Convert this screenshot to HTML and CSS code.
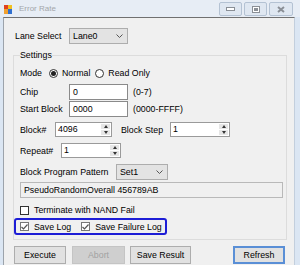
FILE: index.html
```html
<!DOCTYPE html>
<html lang="en">

<head>
    <meta charset="UTF-8">
    <title>Error Rate</title>
    <link rel="stylesheet" href="styles.css">
</head>

<body>
    <div class="window">
        <div class="titlebar">
            <svg class="app-icon" width="8" height="9" viewBox="0 0 8 9">
                <rect x="0" y="0" width="4" height="4" fill="#e04020"/>
                <rect x="4" y="0" width="4" height="4" fill="#f0c020"/>
                <rect x="0" y="4" width="4" height="5" fill="#f0a030"/>
                <rect x="4" y="4" width="4" height="5" fill="#3070d0"/>
            </svg>
            <span class="title">Error Rate</span>
            <div class="caption-buttons">
                <div class="caption-btn">
                    <svg width="9" height="4" viewBox="0 0 9 4"><rect x="0.5" y="0.5" width="8" height="3" fill="#fff" stroke="#8a8f96"/></svg>
                </div>
                <div class="caption-btn">
                    <svg width="8" height="7" viewBox="0 0 8 7"><rect x="0.5" y="0.5" width="7" height="6" fill="#fff" stroke="#8a8f96"/><rect x="2" y="2" width="4" height="3" fill="#8a8f96"/></svg>
                </div>
                <div class="caption-btn close">
                    <svg width="8" height="7" viewBox="0 0 8 7"><path d="M1 1 L7 6 M7 1 L1 6" stroke="#8a8f96" stroke-width="2"/></svg>
                </div>
            </div>
        </div>

        <div class="client">
            <div class="lane-row">
                <span class="label lane-label">Lane Select</span>
                <div class="combo lane-combo">
                    <span>Lane0</span>
                    <svg class="chevron" width="7" height="4" viewBox="0 0 7 4"><polyline points="0.5,0.5 3.5,3.5 6.5,0.5" fill="none" stroke="#555"/></svg>
                </div>
            </div>

            <fieldset class="settings">
                <legend>Settings</legend>

                <div class="row mode-row">
                    <span class="label mode-label">Mode</span>
                    <span class="radio checked"></span>
                    <span class="label radio-text">Normal</span>
                    <span class="radio"></span>
                    <span class="label radio-text">Read Only</span>
                </div>

                <div class="row chip-row">
                    <span class="label field-label">Chip</span>
                    <div class="textbox wide">0</div>
                    <span class="label range">(0-7)</span>
                </div>
                <div class="row start-row">
                    <span class="label field-label">Start Block</span>
                    <div class="textbox wide">0000</div>
                    <span class="label range">(0000-FFFF)</span>
                </div>

                <div class="row block-row">
                    <span class="label block-label">Block#</span>
                    <div class="numeric block-num">
                        <span class="value">4096</span>
                        <span class="spin"><i class="up"></i><i class="down"></i></span>
                    </div>
                    <span class="label step-label">Block Step</span>
                    <div class="numeric step-num">
                        <span class="value">1</span>
                        <span class="spin"><i class="up"></i><i class="down"></i></span>
                    </div>
                </div>

                <div class="row repeat-row">
                    <span class="label repeat-label">Repeat#</span>
                    <div class="numeric repeat-num">
                        <span class="value">1</span>
                        <span class="spin"><i class="up"></i><i class="down"></i></span>
                    </div>
                </div>

                <div class="row pattern-row">
                    <span class="label pattern-label">Block Program Pattern</span>
                    <div class="combo pattern-combo">
                        <span>Set1</span>
                        <svg class="chevron" width="7" height="4" viewBox="0 0 7 4"><polyline points="0.5,0.5 3.5,3.5 6.5,0.5" fill="none" stroke="#555"/></svg>
                    </div>
                </div>

                <div class="readonly-box">PseudoRandomOverall 456789AB</div>

                <div class="row check-row">
                    <span class="checkbox"></span>
                    <span class="label">Terminate with NAND Fail</span>
                </div>

                <div class="row focus-row">
                    <span class="checkbox checked">
                        <svg width="7" height="6" viewBox="0 0 7 6"><polyline points="0.5,3 2.5,5 6.5,0.5" fill="none" stroke="#555" stroke-width="1.2"/></svg>
                    </span>
                    <span class="label">Save Log</span>
                    <span class="checkbox checked second">
                        <svg width="7" height="6" viewBox="0 0 7 6"><polyline points="0.5,3 2.5,5 6.5,0.5" fill="none" stroke="#555" stroke-width="1.2"/></svg>
                    </span>
                    <span class="label">Save Failure Log</span>
                </div>
            </fieldset>

            <div class="buttons">
                <button class="btn execute">Execute</button>
                <button class="btn abort" disabled>Abort</button>
                <button class="btn save">Save Result</button>
                <button class="btn refresh">Refresh</button>
            </div>
        </div>
    </div>
</body>

</html>
```

FILE: styles.css
```css
body {
    margin: 0;
    padding: 0;
    font-family: "Liberation Sans", Arial, sans-serif;
    font-size: 8.8px;
    color: #000;
    background-color: #dbe6f3;
}

.window {
    width: 300px;
    height: 265px;
    overflow: hidden;
    background-color: #dbe6f3;
}

/* title bar */
.titlebar {
    height: 17px;
    display: flex;
    align-items: center;
    background-color: #e7edf5;
}

.app-icon {
    margin-left: 4px;
    margin-top: 1px;
}

.title {
    margin-left: 7px;
    font-size: 8px;
    color: #a3a6aa;
}

.caption-buttons {
    display: flex;
    gap: 2px;
    margin-left: auto;
    margin-right: 7px;
    margin-top: 1px;
}

.caption-btn {
    width: 21px;
    height: 12px;
    border: 1px solid #b4c2d3;
    border-radius: 2px;
    background-color: #dfe7f1;
    display: flex;
    justify-content: center;
    align-items: center;
}

.caption-btn.close {
    width: 22px;
}

/* client area */
.client {
    margin-left: 3px;
    width: 290px;
    height: 248px;
    background-color: #f0f0f0;
    border-top: 1px solid #707070;
    border-left: 1px solid #9ca3ab;
    border-right: 1px solid #c3cfdd;
}

.label {
    white-space: nowrap;
    line-height: 12px;
}

.lane-row {
    display: flex;
    align-items: center;
    height: 16px;
    margin-top: 10px;
    padding-left: 11px;
}

.lane-label {
    width: 54px;
}

.combo {
    height: 16px;
    box-sizing: border-box;
    border: 1px solid #adadad;
    background-color: #e3e3e3;
    display: flex;
    align-items: center;
    padding-left: 3px;
    padding-right: 4px;
}

.combo .chevron {
    margin-left: auto;
}

.lane-combo {
    width: 59px;
}

/* settings group */
.settings {
    margin: 6px 0 0 9px;
    width: 274px;
    box-sizing: border-box;
    border: 1px solid #dcdcdc;
    padding: 0 3px 4px 6px;
    min-width: 0;
}

.settings legend {
    padding: 0;
    line-height: 11px;
}

.row {
    display: flex;
    align-items: center;
}

.mode-row {
    height: 14px;
    margin-top: 5px;
}

.mode-label {
    width: 29px;
}

.radio {
    width: 9px;
    height: 9px;
    box-sizing: border-box;
    border: 1px solid #333;
    border-radius: 50%;
    background-color: #fff;
    display: flex;
    justify-content: center;
    align-items: center;
}

.radio.checked::after {
    content: "";
    width: 5px;
    height: 5px;
    border-radius: 50%;
    background-color: #222;
}

.radio-text {
    margin-left: 4px;
    margin-right: 5px;
}

.chip-row {
    margin-top: 4px;
    height: 16px;
}

.start-row {
    margin-top: 1px;
    height: 16px;
}

.field-label {
    width: 49px;
}

.textbox {
    height: 16px;
    box-sizing: border-box;
    border: 1px solid #8a8a8a;
    background-color: #fff;
    padding-left: 3px;
    line-height: 14px;
}

.textbox.wide {
    width: 59px;
}

.range {
    margin-left: 5px;
}

.block-row {
    margin-top: 5px;
    height: 15px;
}

.block-label {
    width: 35px;
}

.numeric {
    height: 15px;
    box-sizing: border-box;
    border: 1px solid #9a9a9a;
    background-color: #fff;
    display: flex;
    align-items: stretch;
}

.numeric .value {
    flex: 1;
    padding-left: 2px;
    line-height: 13px;
}

.spin {
    width: 9px;
    display: flex;
    flex-direction: column;
    margin: 1px 1px 1px 0;
    gap: 1px;
}

.spin i {
    flex: 1;
    background-color: #e6e6e6;
    display: flex;
    justify-content: center;
    align-items: center;
}

.spin i::after {
    content: "";
    border-left: 2px solid transparent;
    border-right: 2px solid transparent;
}

.spin .up::after {
    border-bottom: 3px solid #333;
}

.spin .down::after {
    border-top: 3px solid #333;
}

.block-num {
    width: 57px;
}

.step-label {
    margin-left: 9px;
    width: 49px;
}

.step-num {
    width: 60px;
}

.repeat-row {
    margin-top: 6px;
    height: 15px;
}

.repeat-label {
    width: 41px;
}

.repeat-num {
    width: 60px;
}

.pattern-row {
    margin-top: 6px;
    height: 16px;
}

.pattern-label {
    width: 96px;
}

.pattern-combo {
    width: 52px;
}

.readonly-box {
    margin-top: 2px;
    height: 16px;
    box-sizing: border-box;
    border: 1px solid #b9b9b9;
    background-color: #f0f0f0;
    padding-left: 3px;
    line-height: 14px;
    white-space: nowrap;
}

.checkbox {
    width: 9px;
    height: 9px;
    box-sizing: border-box;
    border: 1px solid #333;
    background-color: #fff;
    margin-right: 5px;
    display: flex;
    justify-content: center;
    align-items: center;
}

.checkbox.checked {
    border-color: #777;
}

.check-row {
    margin-top: 6px;
    height: 12px;
}

.focus-row {
    margin: 2px 0 0 -6px;
    width: 153px;
    height: 17px;
    box-sizing: border-box;
    border: 2px solid #1d1dd6;
    border-radius: 3px;
    padding-left: 4px;
}

.checkbox.second {
    margin-left: 10px;
}

/* bottom buttons */
.buttons {
    display: flex;
    margin-top: 6px;
    padding-left: 10px;
}

.btn {
    height: 18px;
    box-sizing: border-box;
    border: 1px solid #adadad;
    background-color: #e1e1e1;
    font-family: inherit;
    font-size: 8.8px;
    color: #000;
    padding: 0;
}

.execute {
    width: 52px;
}

.abort {
    width: 53px;
    margin-left: 6px;
    background-color: #cfcfcf;
    border-color: #c4c4c4;
    color: #a2a2a2;
}

.save {
    width: 61px;
    margin-left: 5px;
}

.refresh {
    width: 52px;
    margin-left: 42px;
    border: 2px solid #5a8fd6;
}
```
